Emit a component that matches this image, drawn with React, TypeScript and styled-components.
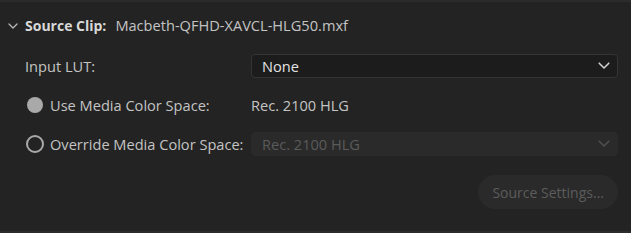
import styled, { createGlobalStyle } from "styled-components";

const GlobalStyle = createGlobalStyle`
  html, body {
    margin: 0;
    padding: 0;
    background: #232323;
  }
  body {
    font-family: "Open Sans", "Noto Sans", sans-serif;
  }
`;

const ChevronDown = ({ size = 12 }: { size?: number }) => (
  <svg width={size} height={size * 0.6} viewBox="0 0 10 6" fill="none">
    <path d="M1 1L5 5L9 1" stroke="currentColor" strokeWidth="1.3" strokeLinecap="round" strokeLinejoin="round" />
  </svg>
);

const Panel = styled.div`
  width: 631px;
  height: 233px;
  box-sizing: border-box;
  background: #232323;
  border-top: 2px solid #2b2b2b;
  border-bottom: 2px solid #2b2b2b;
  padding: 12px 13px 0 0;
  display: flex;
  flex-direction: column;
  color: #c8c8c8;
  font-size: 14.6px;
`;

const Header = styled.div`
  display: flex;
  align-items: center;
  height: 22px;
  padding-left: 8px;
  gap: 7px;
`;

const Toggle = styled.span`
  display: flex;
  color: #b8b8b8;
  width: 10px;
  padding-top: 1px;
`;

const HeaderLabel = styled.span`
  font-weight: 700;
  font-size: 14px;
  color: #d8d8d8;
`;

const FileName = styled.span`
  font-size: 14.6px;
  color: #c4c4c4;
  margin-left: 2px;
`;

const Grid = styled.div`
  display: grid;
  grid-template-columns: 226px 1fr;
  grid-template-rows: 24px 24px 24px;
  margin-top: 18px;
  padding-left: 25px;
  row-gap: 15px;
  align-items: center;
`;

const Label = styled.span`
  color: #c4c4c4;
  white-space: nowrap;
  display: flex;
  align-items: center;
`;

const RadioLabel = styled(Label)`
  padding-left: 1px;
  gap: 6px;
`;

const Radio = styled.span<{ $checked?: boolean }>`
  width: ${({ $checked }) => ($checked ? "16px" : "18px")};
  height: ${({ $checked }) => ($checked ? "16px" : "18px")};
  margin-left: ${({ $checked }) => ($checked ? "1px" : "0")};
  margin-right: ${({ $checked }) => ($checked ? "1px" : "0")};
  border-radius: 50%;
  box-sizing: border-box;
  background: ${({ $checked }) => ($checked ? "#a9a9a9" : "transparent")};
  border: ${({ $checked }) => ($checked ? "none" : "2.5px solid #a9a9a9")};
  flex-shrink: 0;
`;

const Select = styled.div<{ $disabled?: boolean }>`
  height: 24px;
  box-sizing: border-box;
  border-radius: 4px;
  display: flex;
  align-items: center;
  justify-content: space-between;
  padding: 0 7px 0 10px;
  background: ${({ $disabled }) => ($disabled ? "#2a2a2a" : "#1c1c1c")};
  border: 1px solid ${({ $disabled }) => ($disabled ? "#2a2a2a" : "#343434")};
  color: ${({ $disabled }) => ($disabled ? "#5a5a5a" : "#e2e2e2")};
`;

const SelectChevron = styled.span<{ $disabled?: boolean }>`
  display: flex;
  color: ${({ $disabled }) => ($disabled ? "#4e4e4e" : "#d0d0d0")};
`;

const Value = styled.span`
  color: #c4c4c4;
`;

const Footer = styled.div`
  display: flex;
  justify-content: flex-end;
  margin-top: 19px;
`;

const Button = styled.button`
  all: unset;
  height: 34px;
  padding: 0 14px;
  border-radius: 17px;
  background: #2a2a2a;
  color: #5c5c5c;
  font-family: "Open Sans", "Noto Sans", sans-serif;
  font-size: 14px;
  display: flex;
  align-items: center;
`;

export default function App() {
  return (
    <>
      <GlobalStyle />
      <Panel>
        <Header>
          <Toggle>
            <ChevronDown size={10} />
          </Toggle>
          <HeaderLabel>Source Clip:</HeaderLabel>
          <FileName>Macbeth-QFHD-XAVCL-HLG50.mxf</FileName>
        </Header>
        <Grid>
          <Label>Input LUT:</Label>
          <Select>
            <span>None</span>
            <SelectChevron>
              <ChevronDown />
            </SelectChevron>
          </Select>

          <RadioLabel>
            <Radio $checked />
            Use Media Color Space:
          </RadioLabel>
          <Value>Rec. 2100 HLG</Value>

          <RadioLabel>
            <Radio />
            Override Media Color Space:
          </RadioLabel>
          <Select $disabled>
            <span>Rec. 2100 HLG</span>
            <SelectChevron $disabled>
              <ChevronDown />
            </SelectChevron>
          </Select>
        </Grid>
        <Footer>
          <Button>Source Settings...</Button>
        </Footer>
      </Panel>
    </>
  );
}
